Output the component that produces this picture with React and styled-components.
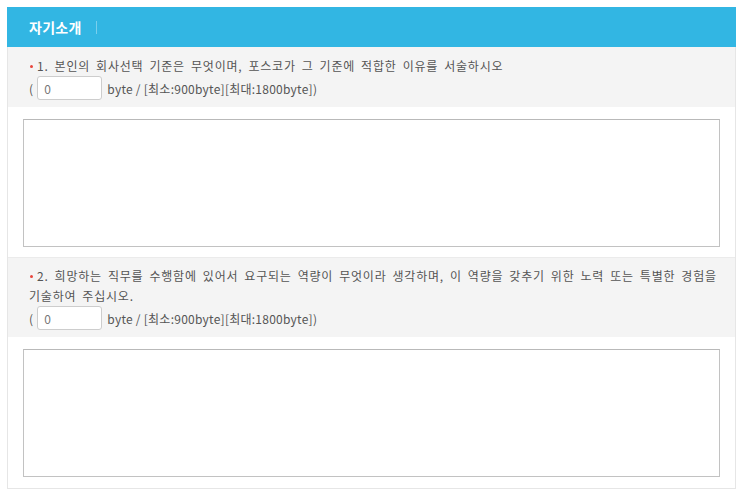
import styled, { createGlobalStyle } from 'styled-components'

const GlobalStyle = createGlobalStyle`
  html, body {
    margin: 0;
    background: #fff;
  }
  body {
    padding: 7px;
    font-family: "Noto Sans CJK KR", "Noto Sans", sans-serif;
  }
  * {
    box-sizing: border-box;
  }
`

const Panel = styled.div`
  border: 1px solid #e6e6e6;
  background: #fff;
`

const Header = styled.div`
  display: flex;
  align-items: center;
  height: 40px;
  margin: -1px -1px 0;
  padding-left: 22px;
  background: #32b6e3;
`

const Title = styled.h2`
  margin: 0;
  font-size: 14px;
  font-weight: 700;
  color: #fff;
  letter-spacing: 0.3px;
`

const Divider = styled.span`
  width: 1px;
  height: 13px;
  margin-left: 14px;
  background: rgba(255, 255, 255, 0.35);
`

const Question = styled.div`
  padding: ${(p) => (p.$first ? '9px' : '8px')} 6px 7px 21px;
  background: #f4f4f4;
  border-top: ${(p) => (p.$first ? 'none' : '1px solid #ebebeb')};
`

const QuestionText = styled.p`
  margin: 0;
  font-size: 12px;
  line-height: 20px;
  color: #555;
  letter-spacing: 0.8px;
  word-spacing: 2.5px;
  word-break: keep-all;
`

const Bullet = styled.span`
  display: inline-block;
  width: 3px;
  height: 3px;
  margin: 0 4px 2px 1px;
  border-radius: 50%;
  background: #e8453c;
  vertical-align: middle;
`

const ByteRow = styled.div`
  display: flex;
  align-items: center;
  height: 24px;
  font-size: 12px;
  color: #555;
  letter-spacing: 0.25px;
`

const Paren = styled.span`
  margin-right: 4px;
`

const ByteInput = styled.input`
  width: 65px;
  height: 24px;
  margin-right: 5px;
  padding: 0 6px;
  border: 1px solid #cdcdcd;
  border-radius: 3px;
  background: #fff;
  font-family: inherit;
  font-size: 12px;
  color: #777;
  outline: none;
`

const AnswerWrap = styled.div`
  padding: 12px 15px ${(p) => (p.$last ? '11px' : '10px')};
`

const Answer = styled.textarea`
  display: block;
  width: 100%;
  height: 128px;
  margin: 0;
  padding: 8px;
  border: 1px solid #c2c2c2;
  border-top-color: #b9b9b9;
  resize: none;
  outline: none;
  font-family: inherit;
  font-size: 12px;
  color: #555;
`

const questions = [
  '1. 본인의 회사선택 기준은 무엇이며, 포스코가 그 기준에 적합한 이유를 서술하시오',
  '2. 희망하는 직무를 수행함에 있어서 요구되는 역량이 무엇이라 생각하며, 이 역량을 갖추기 위한 노력 또는 특별한 경험을 기술하여 주십시오.',
]

function App() {
  return (
    <>
      <GlobalStyle />
      <Panel>
        <Header>
          <Title>자기소개</Title>
          <Divider />
        </Header>
        {questions.map((q, i) => (
          <div key={i}>
            <Question $first={i === 0}>
              <QuestionText>
                <Bullet />
                {q}
              </QuestionText>
              <ByteRow>
                <Paren>(</Paren>
                <ByteInput defaultValue="0" />
                byte / [최소:900byte][최대:1800byte])
              </ByteRow>
            </Question>
            <AnswerWrap $last={i === questions.length - 1}>
              <Answer />
            </AnswerWrap>
          </div>
        ))}
      </Panel>
    </>
  )
}

export default App
